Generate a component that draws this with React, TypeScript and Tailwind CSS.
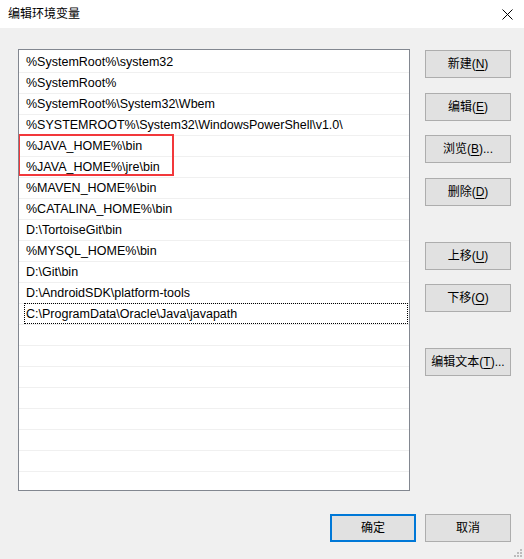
import { ReactNode } from "react";

const paths = [
  "%SystemRoot%\\system32",
  "%SystemRoot%",
  "%SystemRoot%\\System32\\Wbem",
  "%SYSTEMROOT%\\System32\\WindowsPowerShell\\v1.0\\",
  "%JAVA_HOME%\\bin",
  "%JAVA_HOME%\\jre\\bin",
  "%MAVEN_HOME%\\bin",
  "%CATALINA_HOME%\\bin",
  "D:\\TortoiseGit\\bin",
  "%MYSQL_HOME%\\bin",
  "D:\\Git\\bin",
  "D:\\AndroidSDK\\platform-tools",
  "C:\\ProgramData\\Oracle\\Java\\javapath",
];

const ROW_COUNT = 21;
const FOCUSED = 12;

const font = { fontFamily: '"Liberation Sans", "Noto Sans CJK SC", sans-serif' };

function Btn({ children, className = "", primary = false }: { children: ReactNode; className?: string; primary?: boolean }) {
  return (
    <button
      className={`flex items-center justify-center w-[86px] h-[28px] bg-[#e1e1e1] text-[12px] text-black ${
        primary ? "border-2 border-[#0078d7]" : "border border-[#adadad]"
      } ${className}`}
    >
      {children}
    </button>
  );
}

function Key({ k }: { k: string }) {
  return <span className="underline underline-offset-2">{k}</span>;
}

export default function App() {
  return (
    <div className="w-[524px] h-[559px] bg-[#f0f0f0] flex flex-col relative" style={font}>
      {/* title bar */}
      <div className="h-[28px] bg-white flex items-center justify-between pl-[8px] pr-[11px]">
        <span className="text-[12px] text-black">编辑环境变量</span>
        <svg width="11" height="11" viewBox="0 0 11 11">
          <path d="M0.5 0.5 L10.5 10.5 M10.5 0.5 L0.5 10.5" stroke="#000" strokeWidth="1" />
        </svg>
      </div>

      <div className="flex pl-[18px] pt-[21px]">
        {/* path list */}
        <div className="relative w-[392px] h-[442px] pt-[2px] bg-white border border-[#828790] overflow-hidden">
          {Array.from({ length: ROW_COUNT }).map((_, i) => (
            <div
              key={i}
              className="relative h-[21px] border-b border-[#f0f0f0] flex items-center pl-[7px] text-[12.5px] text-black whitespace-nowrap"
            >
              {paths[i] ?? ""}
              {i === FOCUSED && (
                <div className="absolute left-[5px] right-[1px] top-[-1px] bottom-0 border border-dotted border-black" />
              )}
            </div>
          ))}
          <div className="absolute left-[-1px] top-[84px] w-[156px] h-[42px] border-2 border-[#f2383b]" />
        </div>

        {/* action buttons */}
        <div className="flex flex-col ml-[15px]">
          <Btn className="mt-[1px]">新建(<Key k="N" />)</Btn>
          <Btn className="mt-[15px]">编辑(<Key k="E" />)</Btn>
          <Btn className="mt-[14px]">浏览(<Key k="B" />)...</Btn>
          <Btn className="mt-[15px]">删除(<Key k="D" />)</Btn>
          <Btn className="mt-[36px]">上移(<Key k="U" />)</Btn>
          <Btn className="mt-[14px]">下移(<Key k="O" />)</Btn>
          <Btn className="mt-[36px]">编辑文本(<Key k="T" />)...</Btn>
        </div>
      </div>

      {/* dialog buttons */}
      <div className="flex justify-end gap-[9px] pr-[13px] mt-[23px]">
        <Btn primary>确定</Btn>
        <Btn>取消</Btn>
      </div>

      {/* size grip */}
      <svg className="absolute right-[2px] bottom-[2px]" width="8" height="8" viewBox="0 0 8 8">
        {[
          [6, 0],
          [3, 3],
          [6, 3],
          [0, 6],
          [3, 6],
          [6, 6],
        ].map(([x, y], i) => (
          <rect key={i} x={x} y={y} width="2" height="2" fill="#bcbcbc" />
        ))}
      </svg>
    </div>
  );
}
